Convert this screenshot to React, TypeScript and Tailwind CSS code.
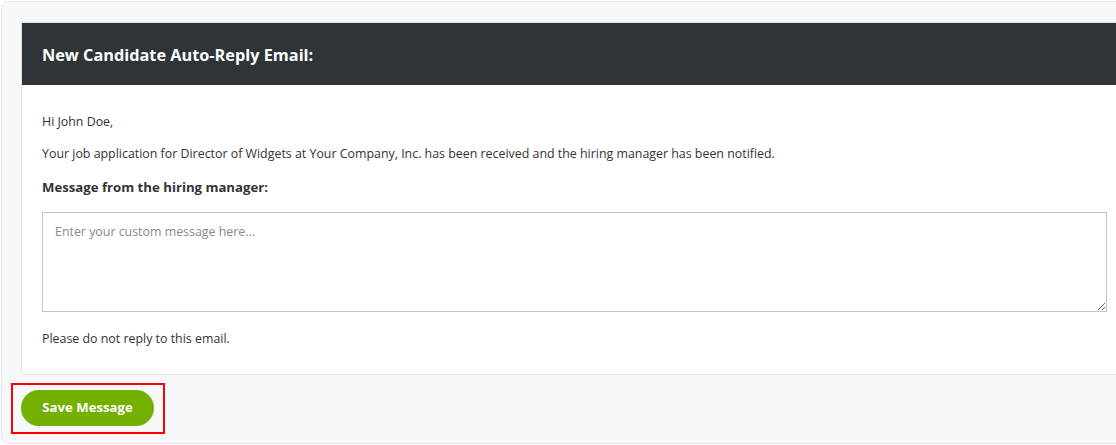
import React from "react";

const font = { fontFamily: '"Open Sans", "Noto Sans", sans-serif' };

export default function App() {
  const [message, setMessage] = React.useState("");

  return (
    <div className="w-[1116px] h-[445px] overflow-hidden bg-white pl-px pt-px" style={font}>
      <div className="w-[1160px] h-[443px] rounded-lg border border-[#e3e5e8] bg-[#f7f8fa] pl-[19px] pt-5">
        <div className="w-[1120px] rounded-bl-[4px] border border-[#dfe1e4] bg-white">
          <div className="h-[62px] bg-[#2e3438] flex items-center pl-5 pt-[2px]">
            <h2 className="text-[16.3px] font-bold text-white">
              New Candidate Auto-Reply Email:
            </h2>
          </div>
          <div className="pl-5 pt-[28px] pb-[26px] text-[12.4px] leading-[18px] text-[#333]">
            <p>Hi John Doe,</p>
            <p className="mt-[14px]">
              Your job application for Director of Widgets at Your Company, Inc. has been
              received and the hiring manager has been notified.
            </p>
            <p className="mt-[14px] text-[13.2px] leading-[20px] font-bold">
              Message from the hiring manager:
            </p>
            <textarea
              value={message}
              onChange={(e) => setMessage(e.target.value)}
              placeholder="Enter your custom message here..."
              className="mt-[15px] block w-[1065px] h-[100px] border border-[#c4c4c4] px-3 py-[10px] text-[12.4px] leading-[18px] text-[#333] placeholder:text-[#8a8a8a] outline-none"
            />
            <p className="mt-[18px]">Please do not reply to this email.</p>
          </div>
        </div>
        <div className="mt-[15px]">
          <button className="relative h-[36px] w-[133px] rounded-full bg-[#74b000] text-[13.2px] font-bold text-white">
            <span className="pointer-events-none absolute -left-[10px] -top-[7px] -right-[11px] -bottom-[8px] border-2 border-[#ff0000]" />
            Save Message
          </button>
        </div>
      </div>
    </div>
  );
}
